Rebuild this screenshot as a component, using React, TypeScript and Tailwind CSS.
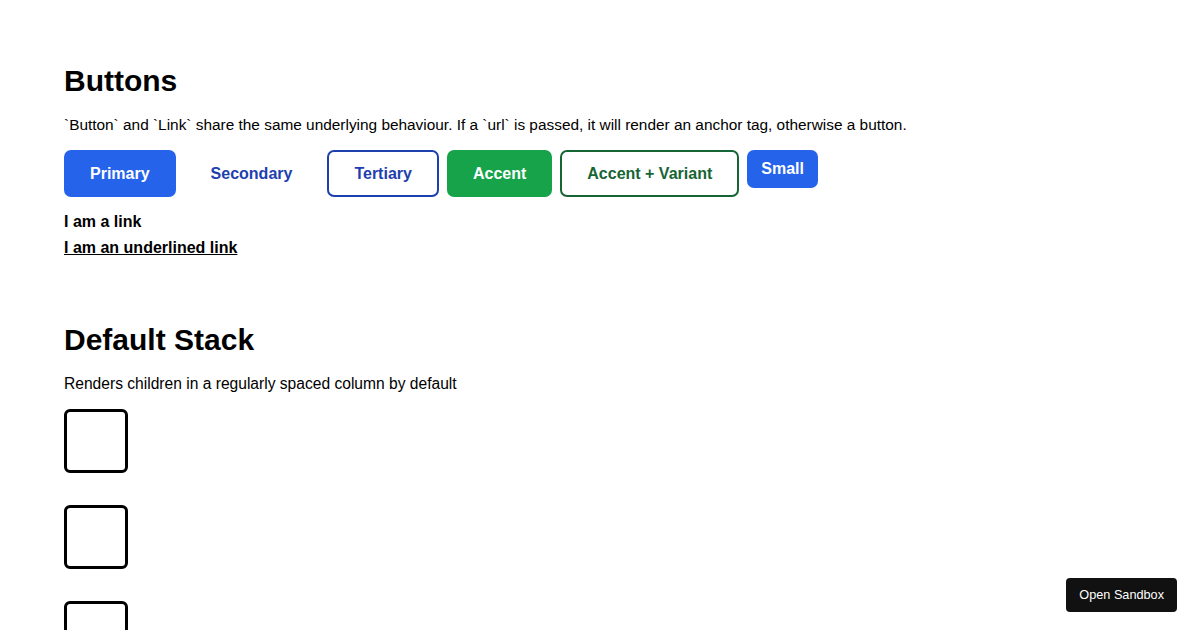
import React from "react";

const btnBase =
  "border-2 rounded-[7px] font-bold text-[16px] leading-[normal]";

export default function App() {
  return (
    <div
      className="min-h-screen bg-white text-black leading-[normal]"
      style={{ fontFamily: '"Liberation Sans", Arial, sans-serif' }}
    >
      <main className="px-16 pt-16 flex flex-col gap-[66px]">
        <section className="flex flex-col gap-4">
          <h1 className="text-[30px] font-bold leading-[normal] mb-[2px]">Buttons</h1>
          <p className="text-[15.4px] leading-[normal]">
            `Button` and `Link` share the same underlying behaviour. If a `url` is passed, it will render an anchor tag, otherwise a button.
          </p>
          <div className="flex items-start gap-2">
            <button className={`${btnBase} px-6 py-[12.5px] bg-[#2563eb] border-[#2563eb] text-white`}>
              Primary
            </button>
            <button className={`${btnBase} px-[25px] py-[12.5px] bg-transparent border-transparent text-[#1e40af]`}>
              Secondary
            </button>
            <button className={`${btnBase} px-[25px] py-[12.5px] bg-white border-[#1e40af] text-[#1e40af]`}>
              Tertiary
            </button>
            <button className={`${btnBase} px-6 py-[12.5px] bg-[#16a34a] border-[#16a34a] text-white`}>
              Accent
            </button>
            <button className={`${btnBase} px-[25px] py-[12.5px] bg-white border-[#166534] text-[#166534]`}>
              Accent + Variant
            </button>
            <button className={`${btnBase} px-3 py-2 bg-[#2563eb] border-[#2563eb] text-white`}>
              Small
            </button>
          </div>
          <div className="flex flex-col gap-2">
            <a href="#" className="font-bold text-[16px] leading-[normal] self-start">
              I am a link
            </a>
            <a href="#" className="font-bold text-[16px] leading-[normal] underline self-start">
              I am an underlined link
            </a>
          </div>
        </section>

        <section className="flex flex-col gap-4">
          <h2 className="text-[30px] font-bold leading-[normal] mb-[2px]">Default Stack</h2>
          <p className="text-[15.6px] leading-[normal]">
            Renders children in a regularly spaced column by default
          </p>
          <div className="flex flex-col gap-8">
            <div className="w-16 h-16 border-[3px] border-black rounded-[6px]" />
            <div className="w-16 h-16 border-[3px] border-black rounded-[6px]" />
            <div className="w-16 h-16 border-[3px] border-black rounded-[6px]" />
          </div>
        </section>
      </main>

      <button className="fixed right-[23px] bottom-[18px] bg-[#111111] text-white text-[12.7px] leading-[normal] px-[13px] py-[10px] rounded-[4px]">
        Open Sandbox
      </button>
    </div>
  );
}
